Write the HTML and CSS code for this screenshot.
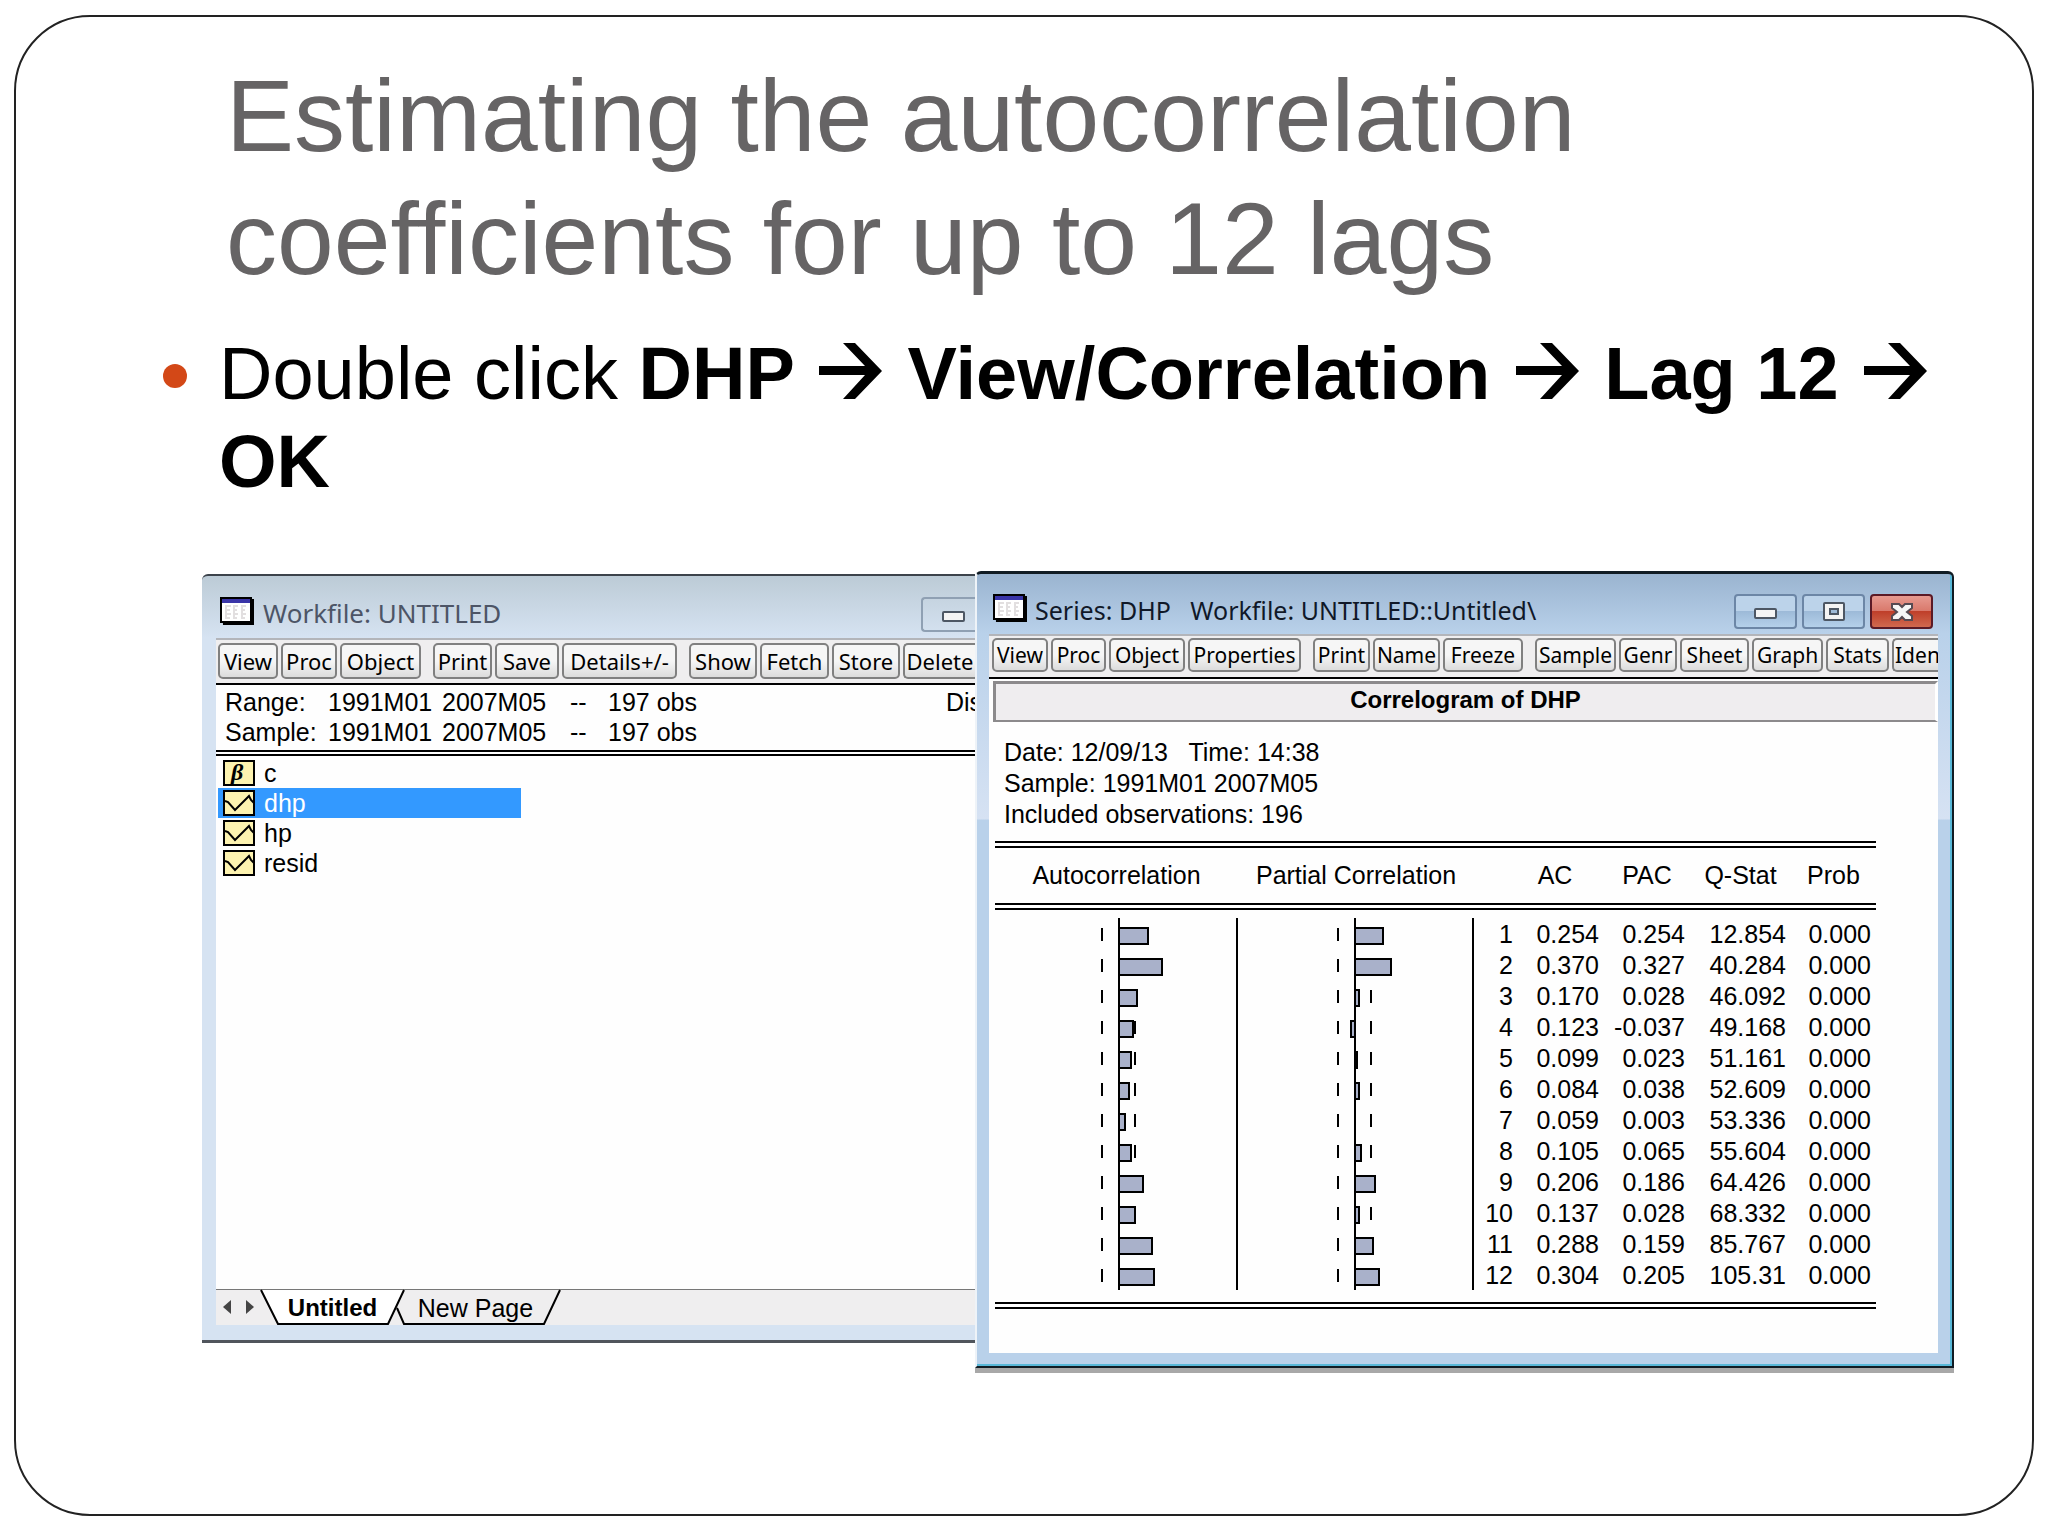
FILE: index.html
```html
<!DOCTYPE html>
<html lang="en">
<head>
<meta charset="utf-8">
<title>Estimating the autocorrelation coefficients for up to 12 lags</title>
<link rel="stylesheet" href="styles.css">
</head>
<body>
<svg class="defs" width="0" height="0" aria-hidden="true">
  <defs>
    <symbol id="win-icon" viewBox="0 0 34 28">
      <path d="M2 2h32v26H3z" fill="#000"/>
      <rect x="1" y="1" width="30" height="24" fill="#fff" stroke="#000" stroke-width="2"/>
      <rect x="2" y="2" width="28" height="4" fill="#3a35a8"/>
      <path d="M6 9h5M6 13h4M6 17h5M6 21h4M14 9h4M14 13h3M14 17h4M14 21h3M21 9h5M21 13h4M21 17h5M21 21h4M6 8v14M14 8v14M22 8v14" stroke="#e2dfe0" stroke-width="2"/>
    </symbol>
    <symbol id="series-icon" viewBox="0 0 32 26">
      <rect x="1" y="1" width="30" height="24" fill="#fdf3b0" stroke="#000" stroke-width="2"/>
      <path d="M2 11l3 1 7 8 11-11 3-3 2 4 3 3" fill="none" stroke="#000" stroke-width="2"/>
    </symbol>
    <symbol id="arrow" viewBox="0 0 73 56">
      <path d="M5 23H51L29 0H41L68 28L41 56H29L51 32H5z"/>
    </symbol>
    <symbol id="axis" viewBox="0 0 236 31">
      <path d="M117 0v31M100 10v13" stroke="#000" stroke-width="2"/>
    </symbol>
    <symbol id="bound" viewBox="0 0 236 31">
      <path d="M133 10v13" stroke="#000" stroke-width="2"/>
    </symbol>
  </defs>
</svg>
<main class="slide">
  <h1 class="title">Estimating the autocorrelation coefficients for up to 12 lags</h1>
  <ul class="steps">
    <li>Double click <b>DHP <svg class="arrow" role="img" aria-label="then"><use href="#arrow"/></svg> View/Correlation <svg class="arrow" role="img" aria-label="then"><use href="#arrow"/></svg> Lag 12 <svg class="arrow" role="img" aria-label="then"><use href="#arrow"/></svg> OK</b></li>
  </ul>

  <div class="desktop">
    <section class="window workfile">
      <header class="titlebar">
        <svg class="win-icon"><use href="#win-icon"/></svg>
        <h2 class="win-title">Workfile: UNTITLED</h2>
        <button class="ctl" aria-label="Minimize"><svg width="24" height="12"><rect x="1" y="1" width="21" height="9" rx="1" fill="#f4f4f4" stroke="#4d5764" stroke-width="2"/></svg></button>
      </header>
      <div class="client">
        <nav class="toolbar">
          <div class="group wf-a"><button>View</button><button>Proc</button><button>Object</button></div>
          <div class="group wf-b"><button>Print</button><button>Save</button><button>Details+/-</button></div>
          <div class="group wf-c"><button>Show</button><button>Fetch</button><button>Store</button><button>Delete</button></div>
        </nav>
        <div class="info">
          <span>Range:</span><span>1991M01</span><span>2007M05</span><span>--</span><span>197 obs</span><span>Dis</span>
          <span>Sample:</span><span>1991M01</span><span>2007M05</span><span>--</span><span>197 obs</span>
        </div>
        <ul class="objects">
          <li><svg class="obj-icon" viewBox="0 0 32 26"><rect x="1" y="1" width="30" height="24" fill="#fdf3b0" stroke="#000" stroke-width="2"/><text class="beta" x="8" y="20">β</text></svg>c</li>
          <li class="selected"><svg class="obj-icon"><use href="#series-icon"/></svg>dhp</li>
          <li><svg class="obj-icon"><use href="#series-icon"/></svg>hp</li>
          <li><svg class="obj-icon"><use href="#series-icon"/></svg>resid</li>
        </ul>
        <div class="tabs">
          <button class="scroll" aria-label="Previous page"><svg width="9" height="14"><path d="M8 0v14L0 7z" fill="#444"/></svg></button>
          <button class="scroll" aria-label="Next page"><svg width="9" height="14"><path d="M1 0v14l8-7z" fill="#444"/></svg></button>
          <button class="tab current"><svg viewBox="0 0 143 35"><path d="M0 0L17 34H127L143 0" fill="#fff" stroke="#000" stroke-width="2"/></svg><span>Untitled</span></button>
          <button class="tab"><svg viewBox="0 0 163 35"><path d="M0 18L7 34H147L163 0" fill="none" stroke="#000" stroke-width="2"/></svg><span>New Page</span></button>
        </div>
      </div>
    </section>

    <section class="window series">
      <header class="titlebar">
        <svg class="win-icon"><use href="#win-icon"/></svg>
        <h2 class="win-title">Series: DHP&nbsp;&nbsp; Workfile: UNTITLED::Untitled\</h2>
        <button class="ctl" aria-label="Minimize"><svg width="24" height="12"><rect x="1" y="1" width="21" height="9" rx="1" fill="#f4f4f4" stroke="#4d5764" stroke-width="2"/></svg></button>
        <button class="ctl mid" aria-label="Maximize"><svg width="22" height="20"><rect x="1" y="1" width="20" height="17" rx="1" fill="#f4f4f4" stroke="#4d5764" stroke-width="2"/><rect x="7" y="7" width="8" height="5" fill="#9fbbd8" stroke="#4d5764" stroke-width="2"/></svg></button>
        <button class="ctl mid close" aria-label="Close"><svg width="24" height="20"><path d="M2 2h7l3 3 3-3h7v4l-5 4 5 4v4h-7l-3-3-3 3H2v-4l5-4-5-4z" fill="#f6f6f6" stroke="#564a52" stroke-width="2"/></svg></button>
      </header>
      <div class="client">
        <nav class="toolbar">
          <div class="group se-a"><button>View</button><button>Proc</button><button>Object</button><button>Properties</button></div>
          <div class="group se-b"><button>Print</button><button>Name</button><button>Freeze</button></div>
          <div class="group se-c"><button>Sample</button><button>Genr</button><button>Sheet</button><button>Graph</button><button>Stats</button><button class="cut">Iden</button></div>
        </nav>
        <h3 class="view-title">Correlogram of DHP</h3>
        <div class="report">
          <p>Date: 12/09/13&nbsp;&nbsp; Time: 14:38<br>Sample: 1991M01 2007M05<br>Included observations: 196</p>
          <table>
            <colgroup><col class="c-ac"><col class="c-pc"><col class="c-lag"><col class="c-num"><col class="c-num"><col class="c-q"><col class="c-prob"></colgroup>
            <thead><tr><th>Autocorrelation</th><th>Partial Correlation</th><th></th><th class="h-ac">AC</th><th>PAC</th><th>Q-Stat</th><th>Prob</th></tr></thead>
            <tbody>
              <tr><td><svg><use href="#axis"/><rect x="117" y="10" width="29" height="16"/></svg></td><td><svg><use href="#axis"/><rect x="117" y="10" width="28" height="16"/></svg></td><td>1</td><td>0.254</td><td>0.254</td><td>12.854</td><td>0.000</td></tr>
              <tr><td><svg><use href="#axis"/><rect x="117" y="10" width="43" height="16"/></svg></td><td><svg><use href="#axis"/><rect x="117" y="10" width="36" height="16"/></svg></td><td>2</td><td>0.370</td><td>0.327</td><td>40.284</td><td>0.000</td></tr>
              <tr><td><svg><use href="#axis"/><rect x="117" y="10" width="18" height="16"/></svg></td><td><svg><use href="#axis"/><use href="#bound"/><rect x="117" y="10" width="4" height="16"/></svg></td><td>3</td><td>0.170</td><td>0.028</td><td>46.092</td><td>0.000</td></tr>
              <tr><td><svg><use href="#axis"/><use href="#bound"/><rect x="117" y="10" width="14" height="16"/></svg></td><td><svg><use href="#axis"/><use href="#bound"/><rect x="113" y="10" width="4" height="16"/></svg></td><td>4</td><td>0.123</td><td>-0.037</td><td>49.168</td><td>0.000</td></tr>
              <tr><td><svg><use href="#axis"/><use href="#bound"/><rect x="117" y="10" width="12" height="16"/></svg></td><td><svg><use href="#axis"/><use href="#bound"/><rect x="117" y="10" width="2" height="16"/></svg></td><td>5</td><td>0.099</td><td>0.023</td><td>51.161</td><td>0.000</td></tr>
              <tr><td><svg><use href="#axis"/><use href="#bound"/><rect x="117" y="10" width="10" height="16"/></svg></td><td><svg><use href="#axis"/><use href="#bound"/><rect x="117" y="10" width="4" height="16"/></svg></td><td>6</td><td>0.084</td><td>0.038</td><td>52.609</td><td>0.000</td></tr>
              <tr><td><svg><use href="#axis"/><use href="#bound"/><rect x="117" y="10" width="6" height="16"/></svg></td><td><svg><use href="#axis"/><use href="#bound"/></svg></td><td>7</td><td>0.059</td><td>0.003</td><td>53.336</td><td>0.000</td></tr>
              <tr><td><svg><use href="#axis"/><use href="#bound"/><rect x="117" y="10" width="12" height="16"/></svg></td><td><svg><use href="#axis"/><use href="#bound"/><rect x="117" y="10" width="6" height="16"/></svg></td><td>8</td><td>0.105</td><td>0.065</td><td>55.604</td><td>0.000</td></tr>
              <tr><td><svg><use href="#axis"/><rect x="117" y="10" width="24" height="16"/></svg></td><td><svg><use href="#axis"/><rect x="117" y="10" width="20" height="16"/></svg></td><td>9</td><td>0.206</td><td>0.186</td><td>64.426</td><td>0.000</td></tr>
              <tr><td><svg><use href="#axis"/><rect x="117" y="10" width="16" height="16"/></svg></td><td><svg><use href="#axis"/><use href="#bound"/><rect x="117" y="10" width="4" height="16"/></svg></td><td>10</td><td>0.137</td><td>0.028</td><td>68.332</td><td>0.000</td></tr>
              <tr><td><svg><use href="#axis"/><rect x="117" y="10" width="33" height="16"/></svg></td><td><svg><use href="#axis"/><rect x="117" y="10" width="18" height="16"/></svg></td><td>11</td><td>0.288</td><td>0.159</td><td>85.767</td><td>0.000</td></tr>
              <tr><td><svg><use href="#axis"/><rect x="117" y="10" width="35" height="16"/></svg></td><td><svg><use href="#axis"/><rect x="117" y="10" width="24" height="16"/></svg></td><td>12</td><td>0.304</td><td>0.205</td><td>105.31</td><td>0.000</td></tr>
            </tbody>
          </table>
        </div>
      </div>
    </section>
  </div>
</main>
</body>
</html>
```
FILE: styles.css
```css
* { box-sizing: border-box; }

body {
  margin: 0;
  min-height: 100vh;
  padding: 15px 14px 20px;
  display: flex;
  background: #fff;
  color: #000;
  font-family: "Liberation Sans", Arial, sans-serif;
}

h1, h2, h3, p, ul { margin: 0; padding: 0; font-weight: normal; }
ul { list-style: none; }
svg { display: block; }
.defs { position: absolute; }

button {
  margin: 0;
  padding: 0;
  border: 0;
  background: none;
  color: inherit;
  font: inherit;
}

/* Slide */
.slide {
  flex: 1;
  min-width: 0;
  padding: 38px 78px 40px 186px;
  border: 2px solid #222;
  border-radius: 76px;
}

.title {
  padding-left: 24px;
  font-size: 102px;
  line-height: 123px;
  color: #666465;
}

.steps {
  margin: 29px 0 0 17px;
  font-size: 74px;
  line-height: 88px;
}

.steps li { position: relative; }

.steps li::before {
  content: "";
  position: absolute;
  left: -56px;
  top: 34px;
  width: 24px;
  height: 24px;
  border-radius: 50%;
  background: #d34817;
}

.arrow { display: inline-block; width: 73px; height: 56px; vertical-align: baseline; }

/* Windows */
.desktop {
  margin-top: 65px;
  display: grid;
  grid-template-columns: minmax(0, 773fr) minmax(0, 979fr);
}

.window { display: flex; flex-direction: column; min-width: 0; }
.client { flex: 1; display: flex; flex-direction: column; min-width: 0; background: #fefefe; }

.titlebar { display: flex; align-items: flex-start; }
.win-icon { flex: none; width: 34px; height: 28px; margin-right: 9px; }

.win-title {
  flex: 1;
  white-space: nowrap;
  font-family: "Noto Sans", "Open Sans", sans-serif;
  line-height: 32px;
}

.ctl {
  flex: none;
  display: flex;
  justify-content: center;
  align-items: flex-end;
  width: 63px;
  height: 35px;
  padding-bottom: 7px;
  border: 2px solid #6c86a6;
  border-radius: 4px;
  background: linear-gradient(#bcd3ea 50%, #9dbad8 50%, #b4d0ea);
}

.ctl.mid { align-items: center; padding-bottom: 0; }

.ctl.close {
  border-color: #5b1a26;
  background: linear-gradient(#e79a90, #d9796c 48%, #bf3f2a 50%, #d0694f);
}

.toolbar {
  display: flex;
  gap: 12px;
  overflow: hidden;
  border-top: 2px solid #b3b5ba;
  border-bottom: 2px solid #000;
  background: #efeeef;
  font-family: "Noto Sans", "Open Sans", sans-serif;
}

.group { flex: none; display: grid; gap: 3px; }

.group button {
  border: 2px solid #808080;
  border-radius: 5px;
  background: linear-gradient(#f6f6f6 50%, #dcdcdc);
  white-space: nowrap;
}

.group .cut { padding-left: 1px; text-align: left; }

/* Workfile window */
.workfile {
  margin: 3px 0 25px;
  padding-left: 14px;
  padding-bottom: 15px;
  overflow: hidden;
  border-top: 2px solid #3c434b;
  border-bottom: 3px solid #50555c;
  border-top-left-radius: 6px;
  background: linear-gradient(#bccbd6, #d6e3f2 62px);
}

.workfile .titlebar { height: 62px; padding: 21px 0 0 4px; overflow: hidden; }
.workfile .win-title { font-size: 26px; color: #4d5566; }

.workfile .ctl {
  width: 54px;
  padding-left: 10px;
  border-right: 0;
  border-radius: 4px 0 0 4px;
  border-color: #8fa0b3;
  background: none;
}

.workfile .toolbar { height: 47px; padding: 3px 0 4px 2px; font-size: 22px; line-height: 32px; }
.wf-a { grid-template-columns: 60px 56px 81px; }
.wf-b { grid-template-columns: 59px 64px 115px; }
.wf-c { grid-template-columns: 68px 69px 68px 72px; }
.wf-c button:last-child { border-right: 0; border-radius: 5px 0 0 5px; }

.info {
  display: grid;
  grid-template-columns: 103px 114px 128px 38px 338px auto;
  align-content: start;
  height: 71px;
  padding: 2px 0 0 9px;
  overflow: hidden;
  border-bottom: 6px double #000;
  font-size: 25px;
  line-height: 30px;
}

.objects { flex: 1; padding: 2px; font-size: 25px; line-height: 30px; }
.objects li { display: flex; align-items: center; gap: 9px; width: 303px; height: 30px; padding-left: 5px; }
.objects .selected { background: #3399ff; color: #fff; }
.obj-icon { width: 32px; height: 26px; }
.beta { font: italic bold 24px "Liberation Serif", serif; }

.tabs {
  display: flex;
  height: 36px;
  border-top: 1px solid #777;
  background: #efeeef;
  font-size: 25px;
  line-height: 34px;
}

.scroll { display: flex; align-items: center; justify-content: center; width: 22px; height: 33px; }
.tab { position: relative; width: 163px; height: 35px; margin-left: -7px; padding-right: 6px; }
.tab.current { z-index: 1; width: 143px; margin-left: 1px; padding-right: 0; font-weight: bold; font-size: 24px; }
.tab svg { position: absolute; inset: 0; width: 100%; height: 100%; overflow: visible; }
.tab span { position: relative; }

/* Series window */
.series {
  padding: 0 14px 13px 12px;
  border: solid #111c24;
  border-width: 3px 2px 2px 2px;
  border-left-color: #eef3f8;
  border-radius: 6px 6px 0 0;
  background: linear-gradient(#9ab4d0, #b9d1ea 60px, #d6e2f3 245px, #b9d1ea 246px);
  box-shadow: inset -2px -2px #58b8d8, 0 5px #a8a8a8;
}

.series .titlebar { height: 60px; padding: 20px 5px 0 4px; gap: 5px; }
.series .win-icon { margin-right: 3px; }
.series .win-title { font-size: 25px; color: #101828; }
.series .toolbar { height: 45px; padding: 2px 0 5px 3px; font-size: 21px; line-height: 30px; }
.se-a { grid-template-columns: 56px 55px 76px 113px; }
.se-b { grid-template-columns: 57px 67px 80px; }
.se-c { grid-template-columns: 81px 58px 69px 71px 63px 49px; }
.se-c button:last-child { border-right: 0; border-radius: 5px 0 0 5px; }

.view-title {
  height: 41px;
  margin: 2px 0 0 4px;
  border: 3px solid #8c8a8c;
  border-width: 3px 3px 2px 3px;
  border-right-color: #fff;
  border-bottom-color: #8c8a8c;
  background: #efedef;
  font-size: 24px;
  font-weight: bold;
  line-height: 31px;
  text-align: center;
}

.report { padding: 15px 4px 44px 6px; font-size: 25px; line-height: 31px; }
.report p { padding-left: 9px; }

/* Correlogram */
table {
  width: 881px;
  margin-top: 11px;
  padding-bottom: 12px;
  table-layout: fixed;
  border-spacing: 0;
  border-top: 7px double #000;
  border-bottom: 7px double #000;
}

.c-ac { width: 243px; }
.c-pc { width: 236px; }
.c-lag { width: 44px; }
.c-num { width: 86px; }
.c-q { width: 101px; }
.c-prob { width: 85px; }

th { height: 62px; padding: 0; border-bottom: 7px double #000; font-weight: normal; text-align: center; }
.h-ac { padding-right: 12px; }
tbody::before { content: ""; display: block; height: 8px; }
td { height: 31px; padding: 2px 5px 0 0; line-height: 29px; text-align: right; }
td:nth-child(-n+2) { padding: 0; border-right: 2px solid #000; }
td svg { width: 236px; height: 31px; margin-left: auto; margin-right: -2px; overflow: visible; }
td rect { fill: #a9b1ca; stroke: #000; stroke-width: 2; }
```
